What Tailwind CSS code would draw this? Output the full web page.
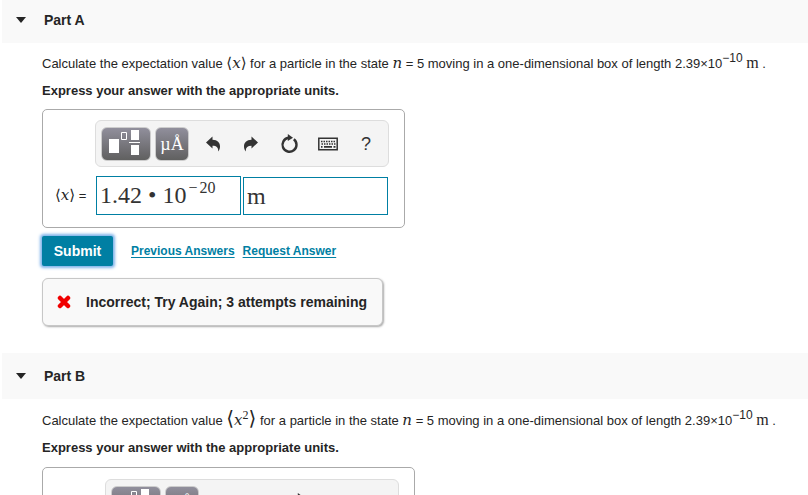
<!DOCTYPE html>
<html lang="en">
<head>
<meta charset="utf-8">
<title>Expectation values</title>
<script src="https://cdn.jsdelivr.net/npm/@tailwindcss/browser@4"></script>
</head>
<body class="h-screen overflow-hidden bg-white">
<svg class="hidden" aria-hidden="true">
  <defs>
    <symbol id="template" viewBox="0 0 34 28">
      <path fill="#fff" d="M0 9h10v14H0zM22 0h8v10h-8zM20 12h11v1H20zM22 15h8v10h-8z"/>
      <path fill="none" stroke="#fff" d="M12.500 2.500h5v7h-5z"/>
    </symbol>
    <symbol id="undo" viewBox="0 0 16 16">
      <path fill="#333" d="M1 6.500 7.500 .5v3.300c5 .2 7.500 3 7.500 6.600 0 2-.7 3.600-1.800 5.100.3-3.900-1.600-5.700-5.700-5.700V12.500z"/>
    </symbol>
    <symbol id="reset" viewBox="0 0 20 20">
      <path fill="none" stroke="#333" stroke-width="2.400" d="M14.800 5.200A7 7 0 1 1 9.500 3.800"/>
      <path fill="#333" d="M8.800 0 14 3.800 8.800 7z"/>
    </symbol>
    <symbol id="keyboard" viewBox="0 0 20 14">
      <path fill="none" stroke="#333" stroke-width="1.500" d="M.8 1.300h18.400v11.400H.8z"/>
      <path stroke="#333" stroke-width="1.400" fill="none" stroke-dasharray="1.500 1" d="M3 4.500h14.500M3.500 7h14"/>
      <path stroke="#333" stroke-width="1.600" d="M3 9.900h1.500M6 9.900h8M15.500 9.900h2"/>
    </symbol>
  </defs>
</svg>
<main class="-mt-[3px] pl-0.5 font-['Liberation_Sans',Arial,sans-serif] text-[13px] leading-4 text-[#252525]">
  <section>
    <h2 class="flex h-[46px] items-center bg-[#f9f9f9] text-sm font-bold">
      <button type="button" class="flex items-center gap-[18px] pl-3.5">
        <svg class="h-1.5 w-2.5" viewBox="0 0 10 6"><path fill="#252525" d="M0 0h10L5 6z"/></svg>
        <span>Part A</span>
      </button>
    </h2>
    <div class="pt-[9px] pl-10">
      <p class="h-6 leading-6 whitespace-nowrap">Calculate the expectation value <span class="font-['DejaVu_Serif',serif] text-[15px] leading-none">⟨<i>x</i>⟩</span> for a particle in the state <i class="font-['DejaVu_Serif',serif] text-[15px] leading-none">n</i> = 5 moving in a one-dimensional box of length 2.39×10<sup class="-top-1.5 text-xs leading-none">−10</sup> <span class="font-['Liberation_Serif',serif] text-base leading-none">m</span> .</p>
      <p class="mt-[7px] font-bold">Express your answer with the appropriate units.</p>
      <div class="mt-2.5 w-[363px] rounded-[5px] border border-[#aaa] pt-2.5 pr-[15px] pb-3">
        <div class="ml-[52px] flex h-[47px] items-center rounded-md border border-[#ddd] bg-[#f4f4f4] pl-[5px]">
          <button type="button" aria-label="Templates" class="flex h-[34px] w-[50px] items-center justify-center rounded-md border border-[#ccc] bg-linear-to-b from-[#918f9c] to-[#606060]"><svg class="h-7 w-[34px]"><use href="#template"/></svg></button>
          <button type="button" aria-label="Units" class="ml-1 h-[34px] w-[34px] rounded-md border border-[#ccc] bg-linear-to-b from-[#918f9c] to-[#606060] font-['Liberation_Serif',serif] text-lg leading-8 text-white">µÅ</button>
          <button type="button" aria-label="Undo" class="ml-4"><svg class="size-4"><use href="#undo"/></svg></button>
          <button type="button" aria-label="Redo" class="ml-[22px]"><svg class="size-4 -scale-x-100"><use href="#undo"/></svg></button>
          <button type="button" aria-label="Reset" class="ml-5"><svg class="size-5"><use href="#reset"/></svg></button>
          <button type="button" aria-label="Keyboard" class="ml-[19px]"><svg class="h-3.5 w-5"><use href="#keyboard"/></svg></button>
          <button type="button" aria-label="Help" class="ml-[23px] text-lg text-[#333]">?</button>
        </div>
        <div class="mt-[9px] flex items-center">
          <label for="unit" class="w-[53px] pl-3 whitespace-nowrap"><span class="font-['DejaVu_Serif',serif] text-[15px] leading-none">⟨<i>x</i>⟩</span> =</label>
          <div role="textbox" contenteditable="true" aria-label="Value" class="h-[39px] w-[145px] border border-[#007fa3] pl-[3px] font-['Liberation_Serif',serif] text-2xl leading-9 whitespace-pre text-[#333]">1.42 • 10<sup class="-top-2.5 pl-0.5 text-base">−</sup><sup class="-top-2.5 pl-0.5 text-base">20</sup></div>
          <input id="unit" value="m" class="ml-0.5 h-[38px] w-[145px] self-end border border-[#007fa3] pl-[3px] font-['Liberation_Serif',serif] text-2xl text-[#333]">
        </div>
      </div>
      <div class="mt-2 flex items-center">
        <button type="button" class="h-[30px] w-[71px] rounded-xs bg-[#007fa3] text-sm font-bold text-white shadow-[0_0_3px_2px_#7fb3ea]">Submit</button>
        <a href="#" class="ml-[18px] text-xs font-bold text-[#007fa3] underline underline-offset-2">Previous Answers</a>
        <a href="#" class="ml-2 text-xs font-bold text-[#007fa3] underline underline-offset-2">Request Answer</a>
      </div>
      <div class="mt-3 flex h-12 w-[341px] items-center rounded-md border border-[#c7c7c7] bg-[#f9f9f9] pl-3.5 text-sm font-bold shadow-[1px_1px_2px_#aaa]">
        <svg class="mr-[15px] size-3.5" viewBox="0 0 14 14"><path stroke="#f00000" stroke-width="4.500" stroke-linecap="round" d="m3 3 8 8M11 3l-8 8"/></svg>
        <span>Incorrect; Try Again; 3 attempts remaining</span>
      </div>
    </div>
  </section>
  <section class="mt-[27px]">
    <h2 class="flex h-[46px] items-center bg-[#f9f9f9] text-sm font-bold">
      <button type="button" class="flex items-center gap-[18px] pl-3.5">
        <svg class="h-1.5 w-2.5" viewBox="0 0 10 6"><path fill="#252525" d="M0 0h10L5 6z"/></svg>
        <span>Part B</span>
      </button>
    </h2>
    <div class="pt-[9px] pl-10">
      <p class="h-6 leading-6 whitespace-nowrap">Calculate the expectation value <span class="font-['DejaVu_Serif',serif] text-[15px] leading-none"><span class="text-xl leading-none">⟨</span><i>x</i><sup class="-top-1.5 font-['Liberation_Serif',serif] text-xs leading-none">2</sup><span class="text-xl leading-none">⟩</span></span> for a particle in the state <i class="font-['DejaVu_Serif',serif] text-[15px] leading-none">n</i> = 5 moving in a one-dimensional box of length 2.39×10<sup class="-top-1.5 text-xs leading-none">−10</sup> <span class="font-['Liberation_Serif',serif] text-base leading-none">m</span> .</p>
      <p class="mt-2 font-bold">Express your answer with the appropriate units.</p>
      <div class="mt-[11px] w-[373px] rounded-[5px] border border-[#aaa] pt-[11px] pr-[15px] pb-3">
        <div class="ml-[62px] flex h-[47px] items-center rounded-md border border-[#ddd] bg-[#f4f4f4] pl-[5px]">
          <button type="button" aria-label="Templates" class="flex h-[34px] w-[50px] items-center justify-center rounded-md border border-[#ccc] bg-linear-to-b from-[#918f9c] to-[#606060]"><svg class="h-7 w-[34px]"><use href="#template"/></svg></button>
          <button type="button" aria-label="Units" class="ml-1 h-[34px] w-[34px] rounded-md border border-[#ccc] bg-linear-to-b from-[#918f9c] to-[#606060] font-['Liberation_Serif',serif] text-lg leading-8 text-white">µÅ</button>
          <button type="button" aria-label="Undo" class="ml-4"><svg class="size-4"><use href="#undo"/></svg></button>
          <button type="button" aria-label="Redo" class="ml-[22px]"><svg class="size-4 -scale-x-100"><use href="#undo"/></svg></button>
          <button type="button" aria-label="Reset" class="ml-5"><svg class="size-5"><use href="#reset"/></svg></button>
          <button type="button" aria-label="Keyboard" class="ml-[19px]"><svg class="h-3.5 w-5"><use href="#keyboard"/></svg></button>
          <button type="button" aria-label="Help" class="ml-[23px] text-lg text-[#333]">?</button>
        </div>
      </div>
    </div>
  </section>
</main>
</body>
</html>
